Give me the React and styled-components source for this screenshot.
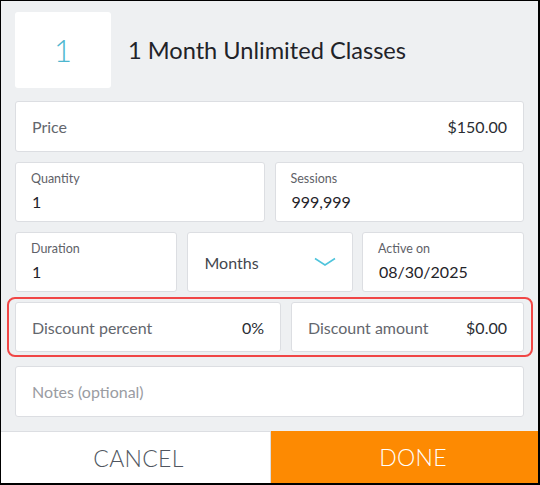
import React from "react";
import styled, { createGlobalStyle } from "styled-components";

const Global = createGlobalStyle`
  html, body { margin: 0; padding: 0; background: #fff; }
  * { box-sizing: border-box; }
`;

const Frame = styled.div`
  width: 540px;
  height: 485px;
  border-style: solid;
  border-color: #000;
  border-width: 1px 2px 2px 1px;
  background: #eef0f2;
  display: flex;
  flex-direction: column;
  font-family: Lato, "Noto Sans", sans-serif;
  overflow: hidden;
`;

const Body = styled.div`
  flex: 1;
  padding: 11px 14px 0 14px;
  display: flex;
  flex-direction: column;
`;

const Header = styled.div`
  display: flex;
  align-items: center;
  gap: 17px;
  height: 76px;
`;

const IconBox = styled.div`
  width: 96px;
  height: 76px;
  background: #fff;
  border-radius: 3px;
  display: flex;
  align-items: center;
  justify-content: center;
  color: #4db6cf;
  font-size: 31px;
  font-weight: 300;
`;

const Title = styled.h1`
  margin: 0;
  font-size: 23.6px;
  font-weight: 400;
  color: #1f2329;
`;

const Card = styled.div`
  background: #fff;
  border: 1px solid #dcdee2;
  border-radius: 3px;
  height: ${(p) => p.$h || 60}px;
  padding: ${(p) => p.$pad || "0 15px"};
  display: flex;
  flex-direction: ${(p) => (p.$stack ? "column" : "row")};
  justify-content: ${(p) => (p.$stack ? "center" : "space-between")};
  align-items: ${(p) => (p.$stack ? "flex-start" : "center")};
`;

const Row = styled.div`
  display: grid;
  grid-template-columns: ${(p) => p.$cols};
  gap: ${(p) => p.$gap || 10}px;
  margin-top: ${(p) => p.$mt}px;
`;

const Highlight = styled(Row)`
  position: relative;
  &::after {
    content: "";
    position: absolute;
    top: -5px;
    bottom: -5px;
    left: -8px;
    right: -9px;
    border: 2px solid #f04646;
    border-radius: 8px;
    pointer-events: none;
  }
`;

const Label = styled.span`
  font-size: 16px;
  color: ${(p) => (p.$muted ? "#9a9ca2" : "#63666d")};
`;

const Value = styled.span`
  font-size: 16px;
  color: #2a2d33;
`;

const SmallLabel = styled.span`
  font-size: 12.5px;
  color: #5e6168;
  line-height: 16px;
  margin-top: -2px;
`;

const FieldValue = styled.span`
  font-size: 16px;
  color: #1f2329;
  line-height: 20px;
  margin-top: 5px;
  padding-left: 1px;
`;

const SelectText = styled.span`
  font-size: 16px;
  color: #43464d;
`;

const Footer = styled.div`
  height: 52px;
  margin-top: 14px;
  display: grid;
  grid-template-columns: 270px 1fr;
`;

const FooterButton = styled.button`
  border: none;
  margin: 0;
  font-family: Lato, "Noto Sans", sans-serif;
  font-size: 23px;
  font-weight: 300;
  letter-spacing: 0.3px;
  background: ${(p) => (p.$primary ? "#fd8a02" : "#fff")};
  color: ${(p) => (p.$primary ? "#fff" : "#505660")};
  border-top: ${(p) => (p.$primary ? "none" : "1px solid #dcdee2")};
  border-right: ${(p) => (p.$primary ? "none" : "1px solid #dcdee2")};
  padding: 0 0 0 ${(p) => p.$shift}px;
  text-align: center;
`;

const Chevron = () => (
  <svg width="22" height="10" viewBox="0 0 22 10" fill="none">
    <polyline points="1,1.5 11,8 21,1.5" stroke="#4fc4dc" strokeWidth="1.5" />
  </svg>
);

export default function App() {
  return (
    <>
      <Global />
      <Frame>
        <Body>
          <Header>
            <IconBox>1</IconBox>
            <Title>1 Month Unlimited Classes</Title>
          </Header>

          <Row $cols="1fr" $mt={13}>
            <Card $h={51} $pad="0 16px">
              <Label>Price</Label>
              <Value>$150.00</Value>
            </Card>
          </Row>

          <Row $cols="1fr 1fr" $mt={10}>
            <Card $stack>
              <SmallLabel>Quantity</SmallLabel>
              <FieldValue>1</FieldValue>
            </Card>
            <Card $stack>
              <SmallLabel>Sessions</SmallLabel>
              <FieldValue>999,999</FieldValue>
            </Card>
          </Row>

          <Row $cols="162px 1fr 162px" $gap={9.5} $mt={10}>
            <Card $stack>
              <SmallLabel>Duration</SmallLabel>
              <FieldValue>1</FieldValue>
            </Card>
            <Card $pad="0 16px 0 17px">
              <SelectText>Months</SelectText>
              <Chevron />
            </Card>
            <Card $stack>
              <SmallLabel>Active on</SmallLabel>
              <FieldValue>08/30/2025</FieldValue>
            </Card>
          </Row>

          <Highlight $cols="266px 1fr" $mt={10}>
            <Card $h={50} $pad="0 16px">
              <Label>Discount percent</Label>
              <Value>0%</Value>
            </Card>
            <Card $h={50} $pad="0 16px">
              <Label>Discount amount</Label>
              <Value>$0.00</Value>
            </Card>
          </Highlight>

          <Row $cols="1fr" $mt={14}>
            <Card $h={51} $pad="0 16px">
              <Label $muted>Notes (optional)</Label>
            </Card>
          </Row>
        </Body>
        <Footer>
          <FooterButton $shift={6}>CANCEL</FooterButton>
          <FooterButton $primary $shift={17}>DONE</FooterButton>
        </Footer>
      </Frame>
    </>
  );
}
